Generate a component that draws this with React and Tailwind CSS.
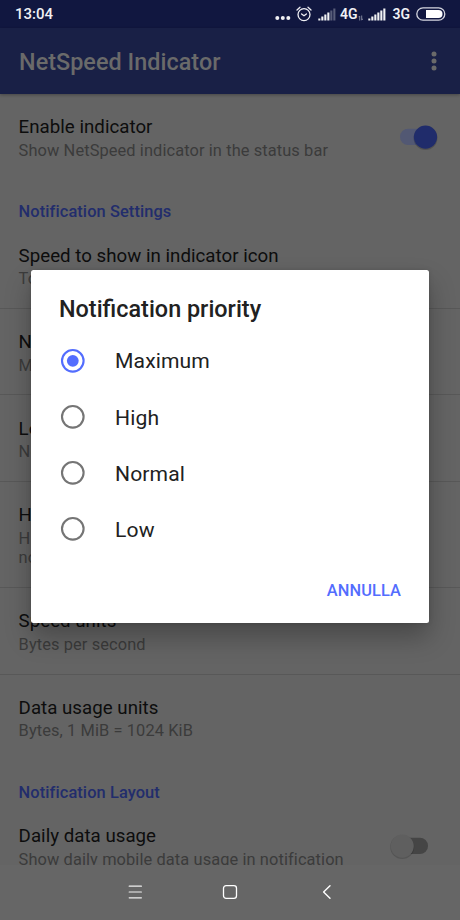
import { useState } from "react";

const priorities = ["Maximum", "High", "Normal", "Low"];

const settings = [
  { title: "Speed to show in indicator icon", summary: ["Total speed"] },
  { title: "Notification priority", summary: ["Maximum"] },
  { title: "Lock screen notification", summary: ["Never show"] },
  {
    title: "Hide when disconnected",
    summary: ["Hide the indicator when there is", "no connection"],
  },
  { title: "Speed units", summary: ["Bytes per second"] },
  { title: "Data usage units", summary: ["Bytes, 1 MiB = 1024 KiB"] },
];

function Signal({ level, className }) {
  return (
    <svg width="18" height="13" viewBox="0 0 18 13" className={className}>
      {[2, 4, 6, 8, 10, 12].map((h, i) => (
        <rect
          key={h}
          x={i * 3 + 0.3}
          y={12.5 - h}
          width="2.1"
          height={h}
          fill="#fff"
          opacity={i < level ? 0.95 : 0.3}
        />
      ))}
    </svg>
  );
}

function StatusBar() {
  return (
    <div className="flex h-7 shrink-0 items-center bg-[#111740] pl-[15px] pr-[14px] text-[#f0f0f4]">
      <span className="text-[15px] leading-7 font-medium">13:04</span>
      <svg width="16" height="6" viewBox="0 0 16 6" className="ml-auto mt-2" fill="#f0f0f4">
        <circle cx="2.3" cy="3" r="2" />
        <circle cx="7.8" cy="3" r="2" />
        <circle cx="13.3" cy="3" r="2" />
      </svg>
      <svg
        width="16"
        height="16"
        viewBox="0 0 16 16"
        className="ml-[5px]"
        fill="none"
        stroke="#f0f0f4"
        strokeWidth="1.3"
        strokeLinecap="round"
        strokeLinejoin="round"
      >
        <circle cx="8" cy="8.6" r="6" />
        <path d="M5.6 8 8 9.8 10.4 8M1 4 4 1.2M15 4 12 1.2" />
      </svg>
      <Signal level={4} className="ml-[6px]" />
      <span className="ml-1 text-[14px] leading-7 font-semibold">4G</span>
      <svg width="6" height="6" viewBox="0 0 6 6" className="ml-px mt-[7px]" stroke="#8b8ea5" fill="none">
        <path d="M1.7 5.5V1L.5 2.2M3.7 .5V5L5 3.8" strokeWidth=".9" />
      </svg>
      <Signal level={6} className="ml-1" />
      <span className="ml-[6px] text-[14px] leading-7 font-semibold">3G</span>
      <svg width="30" height="14" viewBox="0 0 30 14" className="ml-[6px]">
        <rect x=".8" y=".8" width="28" height="12.4" rx="6.2" fill="none" stroke="#d5d6df" strokeWidth="1.3" />
        <path d="M10 3H22.5A4 4 0 0 1 22.5 11H10Z" fill="#fff" />
      </svg>
    </div>
  );
}

function Toolbar() {
  return (
    <div className="z-10 flex h-[66px] shrink-0 items-center justify-between bg-[#192046] pl-[19px] pr-[22px] shadow-[0_1px_3px_rgba(0,0,0,0.3)]">
      <h1 className="pt-[2px] text-[23.4px] leading-7 font-medium tracking-[0.03px] text-[#6a6a6a]">NetSpeed Indicator</h1>
      <svg width="8" height="22" viewBox="0 0 8 22" fill="#6a6a6a">
        <circle cx="4" cy="4" r="2.5" />
        <circle cx="4" cy="11" r="2.5" />
        <circle cx="4" cy="18" r="2.5" />
      </svg>
    </div>
  );
}

function Switch({ on }) {
  return on ? (
    <svg width="42" height="30" viewBox="0 0 42 30" className="mr-5 mt-[7px]">
      <rect x="2" y="6.7" width="37" height="16.4" rx="8.2" fill="#525873" />
      <circle cx="27.5" cy="16" r="12" fill="#000" opacity=".18" />
      <circle cx="27.5" cy="15.1" r="11.6" fill="#202c6b" />
    </svg>
  ) : (
    <svg width="42" height="30" viewBox="0 0 42 30" className="mr-[29px] mt-[7px]">
      <rect x="2" y="6.7" width="37" height="16.4" rx="8.2" fill="#454545" />
      <circle cx="13.2" cy="16" r="12" fill="#000" opacity=".15" />
      <circle cx="13.2" cy="15.1" r="11.6" fill="#5f5f5f" />
    </svg>
  );
}

function Row({ title, summary, divider, children }) {
  return (
    <div
      className={
        "flex shrink-0 items-start pl-[18.6px] pb-[19px] pt-[21.1px] " +
        (divider ? "border-b border-[#585858]" : "border-b border-transparent")
      }
    >
      <div className="grow">
        <div className="text-[18.7px] leading-[25px] tracking-[0.02px] text-[#0d0d0d]">{title}</div>
        <div className="pt-[0.8px] text-[16.4px] leading-[19.6px] tracking-[0.1px] text-[#3b3b3b]">
          {summary.map((line) => (
            <div key={line} className="whitespace-nowrap">{line}</div>
          ))}
        </div>
      </div>
      {children}
    </div>
  );
}

function Category({ children }) {
  return (
    <div className="h-[42px] shrink-0 pl-[18.6px] pt-[20.7px] text-[16.4px] leading-[22px] font-medium tracking-[0.1px] text-[#222d6c]">
      {children}
    </div>
  );
}

function NavBar() {
  return (
    <div className="z-10 flex h-[55px] shrink-0 items-center bg-[#666] pb-px pl-[128px]">
      <svg width="14" height="14" viewBox="0 0 14 14" stroke="#efefef" strokeWidth="1.2" strokeLinecap="round">
        <path d="M1.2 1.2H13.4M1.2 7H13.4M1.2 12.8H13.4" />
      </svg>
      <svg width="16" height="16" viewBox="0 0 16 16" className="ml-[80px]" fill="none" stroke="#fff" strokeWidth="1.3">
        <rect x="1.5" y="1.7" width="13" height="12.6" rx="2.6" />
      </svg>
      <svg
        width="10"
        height="16"
        viewBox="0 0 10 16"
        className="ml-[84px]"
        fill="none"
        stroke="#fff"
        strokeWidth="1.4"
        strokeLinecap="round"
        strokeLinejoin="round"
      >
        <path d="M8 1.8 1.6 8 8 14.2" />
      </svg>
    </div>
  );
}

function PriorityDialog() {
  const [selected, setSelected] = useState("Maximum");

  return (
    <div className="absolute left-[31px] top-[270px] z-20 flex h-[352.5px] w-[398px] flex-col rounded-[2.5px] bg-white shadow-[0_14px_26px_rgba(0,0,0,0.28),0_0_5px_rgba(0,0,0,0.12)]">
      <h2 className="pl-7 pt-[24.5px] text-[23.4px] leading-7 font-medium text-[#212121]">Notification priority</h2>
      <div className="pt-[10px]">
        {priorities.map((name) => (
          <div
            key={name}
            className="flex h-[56.2px] cursor-pointer items-center pl-[29px]"
            onClick={() => setSelected(name)}
          >
            <svg width="26" height="26" viewBox="0 0 26 26" fill="none">
              <circle cx="12.8" cy="12.8" r="10.8" stroke={selected === name ? "#536dfe" : "#757575"} strokeWidth="2.1" />
              {selected === name && <circle cx="12.8" cy="12.8" r="5.9" fill="#536dfe" />}
            </svg>
            <span className="pl-[29px] pt-[1.8px] text-[21.1px] leading-7 tracking-[0.12px] text-[#212121]">{name}</span>
          </div>
        ))}
      </div>
      <button className="mr-7 mt-[22px] self-end text-[16.4px] leading-6 font-medium tracking-[0.1px] text-[#536dfe]">
        ANNULLA
      </button>
    </div>
  );
}

export default function App() {
  return (
    <div className="relative flex h-[920px] w-[460px] flex-col overflow-hidden bg-[#646464] font-['Roboto',sans-serif]">
      <StatusBar />
      <Toolbar />
      <div className="flex min-h-0 grow flex-col overflow-hidden">
        <Row title="Enable indicator" summary={["Show NetSpeed indicator in the status bar"]}>
          <Switch on />
        </Row>
        <Category>Notification Settings</Category>
        {settings.map((item, i) => (
          <Row key={item.title} {...item} divider={i < settings.length - 1} />
        ))}
        <Category>Notification Layout</Category>
        <Row title="Daily data usage" summary={["Show daily mobile data usage in notification"]}>
          <Switch />
        </Row>
      </div>
      <NavBar />
      <PriorityDialog />
    </div>
  );
}
